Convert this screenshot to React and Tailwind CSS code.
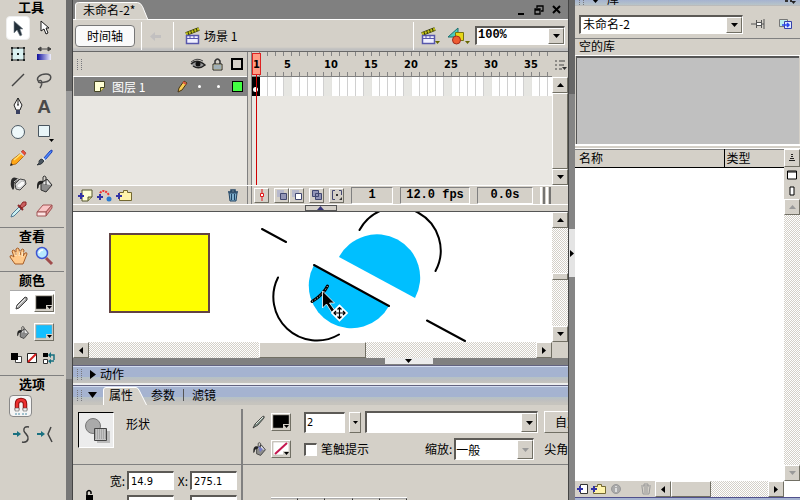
import React from "react";

const BEVEL = "border border-t-white border-l-white border-r-[#716f64] border-b-[#716f64] bg-[#d4d0c8]";
const SUNK = "border-t-2 border-l-2 border-b border-r border-t-[#5c5a56] border-l-[#5c5a56] border-b-white border-r-white bg-white";
const CHECKER = "bg-[repeating-conic-gradient(#fff_0_25%,#d4d0c8_0_50%)] bg-[length:2px_2px]";
const HEADER = "bg-[linear-gradient(#636380_0,#636380_1px,#d3dcf0_1px,#d3dcf0_2px,#a5b3d0_2px,#a5b3d0_12px,#b5c2c6_12px,#bebfc0_15px,#c6c4be_18px)]";
const NUM = "font-['DejaVu_Sans_Condensed','DejaVu_Sans',sans-serif]";

function Svg({ w = 20, h = 20, children, className = "" }) {
  return (
    <svg width={w} height={h} viewBox={`0 0 ${w} ${h}`} fill="none" aria-hidden="true" className={`shrink-0 ${className}`}>
      {children}
    </svg>
  );
}

const ARROWS = {
  up: "M0 4h7L3.500 0z",
  down: "M0 0h7L3.500 4z",
  left: "M4 0v7L0 3.500z",
  right: "M0 0v7l4-3.500z",
};

function Arrow({ dir, color = "#000" }) {
  const tall = dir === "left" || dir === "right";
  return (
    <Svg w={tall ? 4 : 7} h={tall ? 7 : 4}>
      <path d={ARROWS[dir]} fill={color} />
    </Svg>
  );
}

function ScrollButton({ dir, color }) {
  return (
    <button aria-label={`Scroll ${dir}`} className={`flex h-4 w-4 shrink-0 items-center justify-center ${BEVEL}`}>
      <Arrow dir={dir} color={color} />
    </button>
  );
}

function Combo({ label, value, className = "", textClass = "pl-1" }) {
  return (
    <div className={`flex ${SUNK} ${className}`}>
      <select aria-label={label} className={`min-w-0 flex-1 appearance-none bg-white outline-none ${textClass}`}>
        <option>{value}</option>
      </select>
      <span className={`flex w-4 shrink-0 items-center justify-center ${BEVEL}`}>
        <Arrow dir="down" />
      </span>
    </div>
  );
}

function Grip() {
  return (
    <Svg w={5} h={11}>
      {[0, 2, 4, 6, 8, 10].map((y) => (
        <path key={y} d={`M0 ${y}h1v1H0zM4 ${y}h1v1H4z`} fill="#77777c" />
      ))}
    </Svg>
  );
}

const brush = (
  <>
    <path d="M9 11L16 3l2-1 0 2-7 8z" fill="#4d8bff" stroke="#1d3fb8" />
    <path d="M8 10l3 3" stroke="#dfe4e8" strokeWidth="2.500" />
    <path d="M8 11l2 2q-2 4-7 4 3-2 2-4 1-2 3-2z" fill="#4a5560" stroke="#252b30" strokeWidth="0.800" />
  </>
);

const bucketShape = (
  <>
    <path d="M7 9l6-4 5 6-6 7-5-2z" fill="#8c8c8c" stroke="#333" />
    <path d="M9 9l4-3 4 5-7-1z" fill="#e9e9e9" />
    <path d="M12 11V3q-2-2-3 0v4" stroke="#333" />
    <path d="M9 7Q2 5 3 15q2-1 2-4l4-2z" fill="#222" />
  </>
);

const TOOLS = [
  ["Selection", <path key="a" d="M6 3v12l3-3 3 6 2-1-2-6h3z" fill="#24303a" stroke="#7f8b94" strokeWidth="0.600" />],
  ["Subselection", <path key="a" d="M7 3v10l3-2 2 5 2-1-2-5h3z" fill="#fff" stroke="#1b1b1b" />],
  ["Free Transform", (
    <g key="a">
      <path d="M4 4h12v12H4z" fill="#d9f1f1" stroke="#222" />
      <path d="M3 3h2v2H3zM15 3h2v2h-2zM3 15h2v2H3zM15 15h2v2h-2zM9 3h2v2H9zM9 15h2v2H9zM3 9h2v2H3zM15 9h2v2h-2zM9 9h2v2H9z" fill="#1c2222" />
    </g>
  )],
  ["Gradient Transform", (
    <g key="a">
      <defs><linearGradient id="blueFade"><stop stopColor="#0b0b9c" /><stop offset="1" stopColor="#f0f0ff" /></linearGradient></defs>
      <path d="M3 10h14v6H3z" fill="url(#blueFade)" />
      <path d="M4 5h13M7 3L4 5l3 2zM14 3l3 2-3 2z" stroke="#444" fill="#444" />
    </g>
  )],
  ["Line", <path key="a" d="M4 16L16 4" stroke="#444" strokeWidth="1.500" />],
  ["Lasso", <path key="a" d="M5 12C1 8 6 4 12 4c7 0 6 7-1 8-4 1-8 1-6-1 3-2 4 3 1 7" stroke="#4d4d4d" strokeWidth="1.500" />],
  ["Pen", (
    <g key="a">
      <path d="M10 2l4 7-2 5H8L6 9z" fill="#f8f8f8" stroke="#222" />
      <path d="M10 2v7" stroke="#222" />
      <path d="M10 8l1 1-1 1-1-1z" fill="#222" />
      <path d="M8 14h4v4H8z" fill="#394060" />
    </g>
  )],
  ["Text", null],
  ["Oval", <circle key="a" cx="10" cy="10" r="6.500" fill="#eef8fa" stroke="#4c5963" />],
  ["Rectangle", (
    <g key="a">
      <path d="M4.500 3.500h11v11h-11z" fill="#e8f5f8" stroke="#49555f" />
      <path d="M15 17h5l-2.500 3z" fill="#000" />
    </g>
  )],
  ["Pencil", (
    <g key="a">
      <path d="M3 17l1-5 9-7 3 3-8 8z" fill="#ffa716" stroke="#a45b0b" strokeWidth="0.800" />
      <path d="M6 12l8-7" stroke="#ffe574" strokeWidth="1.500" />
      <path d="M13 4l2-2 3 3-2 3z" fill="#e84e3a" stroke="#963329" strokeWidth="0.600" />
      <path d="M12 4l4 4" stroke="#d7dce0" strokeWidth="1.500" />
      <path d="M2 18l1-3 2 2z" fill="#222" />
    </g>
  )],
  ["Brush", <g key="a">{brush}</g>],
  ["Ink Bottle", (
    <g key="a">
      <path d="M7 10l5-5 5 1 1 4-6 6-4-1z" fill="#d8d8d8" stroke="#444" />
      <path d="M9 11l5-4 3 1-1 3-4 3-3-1z" fill="#fafafa" stroke="#999" strokeWidth="0.500" />
      <path d="M11 5Q4 1 3 7q-1 6 2 9 2-2 1-6l4-4z" fill="#2b2b2b" />
      <path d="M6 8l4-3" stroke="#ddd" />
    </g>
  )],
  ["Paint Bucket", <g key="a">{bucketShape}</g>],
  ["Eyedropper", (
    <g key="a">
      <path d="M3 17l1-3 7-7 2 2-7 7z" fill="#c9f0f2" stroke="#547a94" />
      <path d="M10 5l5 5" stroke="#8c2525" strokeWidth="2" />
      <path d="M12 6l3-4 3 0 0 3-4 3z" fill="#c96060" stroke="#8c2525" />
    </g>
  )],
  ["Eraser", (
    <g key="a">
      <path d="M3 12l6-7h9l-6 7z" fill="#f8c5c5" stroke="#a15454" />
      <path d="M12 12l6-7v3l-6 8z" fill="#e39494" stroke="#a15454" />
      <path d="M3 12h9v4H3z" fill="#fde3e3" stroke="#a15454" />
    </g>
  )],
];

function Swatch({ color, none = false, label }) {
  return (
    <button aria-label={label} className={`flex shrink-0 ${BEVEL}`}>
      <Svg w={18} h={16}>
        <path d="M1 1h16v13H1z" fill={none ? "#fff" : color} stroke="#a5a29a" strokeWidth="0.500" />
        {none && <path d="M3 13L15 2" stroke="#c5174f" strokeWidth="2" />}
        <path d="M11 10h7v6h-7z" fill="#d4d0c8" />
        <path d="M12 11h5l-2.500 3z" fill="#000" />
      </Svg>
    </button>
  );
}

function SectionTitle({ children, className = "h-[17px]" }) {
  return <h2 className={`flex items-center justify-center pb-0.5 text-[13px] leading-none font-bold ${className}`}>{children}</h2>;
}

function Toolbar() {
  return (
    <aside className="flex w-[66px] shrink-0 flex-col bg-[#d4d0c8]">
      <div className="w-[62px]"><SectionTitle className="h-[15px]">工具</SectionTitle></div>
      <div className="grid auto-rows-[26px] grid-cols-[26px_26px] pl-[5px]">
        {TOOLS.map(([name, art], i) => (
          <button
            key={name}
            aria-label={name}
            className={`m-px flex items-center justify-center rounded-sm ${i === 0 ? "border border-[#eee] bg-white" : ""}`}
          >
            {art ? <Svg>{art}</Svg> : <span className="font-['Liberation_Sans',sans-serif] text-[19px] leading-none font-bold text-[#4a4a4a]">A</span>}
          </button>
        ))}
      </div>
      <section className="mt-1 w-16 border-t border-[#808080]">
        <SectionTitle>查看</SectionTitle>
        <div className="flex h-[22px] items-center gap-1.5 pl-2">
          <button aria-label="Hand">
            <Svg>
              <path d="M7 18L2 11q0-3 4 0L4 5q1-2 3 0l1 4V3q2-2 3 0l1 6 1-5q2-2 3 0l-1 6 2-3q2-1 2 1l-4 10z" fill="#ffc98a" stroke="#a45d28" />
              <path d="M8 6v4M12 5l-1 5M15 6l-1 5" stroke="#fff0cf" />
            </Svg>
          </button>
          <button aria-label="Zoom">
            <Svg>
              <path d="M12 12l6 6" stroke="#a04c4c" strokeWidth="3" />
              <circle cx="8" cy="7" r="5.500" fill="#b9e9ff" stroke="#4056d2" strokeWidth="1.500" />
              <path d="M5 7q1-3 4-3" stroke="#fff" strokeWidth="1.500" />
            </Svg>
          </button>
        </div>
      </section>
      <section className="mt-1 w-16 border-t border-[#808080]">
        <SectionTitle>颜色</SectionTitle>
        <div className="mt-px ml-2.5 flex h-6 w-[45px] items-center justify-between border-t border-[#aaa] bg-white px-px">
          <Svg><path d="M5 16l1-4 8-8q3 0 2 3l-8 8z" fill="#aaa" stroke="#444" /><path d="M6 14l8-8" stroke="#eee" /></Svg>
          <Swatch label="Stroke color" color="#000" />
        </div>
        <div className="mt-1.5 ml-2.5 flex h-6 w-[45px] items-center justify-between px-px">
          <Svg w={20} h={20}><g transform="translate(4 3) scale(.75)">{bucketShape}</g></Svg>
          <Swatch label="Fill color" color="#14bfff" />
        </div>
        <div className="mt-1.5 flex h-4 items-center gap-1 pl-2.5">
          <button aria-label="Black and white"><Svg w={12} h={12}><path d="M5.500 4.500h6v6h-6z" fill="#fff" stroke="#444" /><path d="M1 1h7v7H1z" fill="#000" /></Svg></button>
          <button aria-label="No color"><Svg w={12} h={12}><path d="M1.500 1.500h9v9h-9z" fill="#fff" stroke="#222" /><path d="M2 10l8-8" stroke="#d51d1d" strokeWidth="2" /></Svg></button>
          <button aria-label="Swap colors">
            <Svg w={14} h={12}>
              <path d="M1 1h5v4H1z" fill="#000" /><path d="M1.500 7.500h4v4h-4z" fill="#fff" stroke="#333" />
              <path d="M8 3h4v5M12 9H8" stroke="#187080" strokeWidth="1.500" /><path d="M9 0v6L6 3zM9 7v5L6 9z" fill="#187080" />
            </Svg>
          </button>
        </div>
      </section>
      <section className="mt-[9px] w-16 border-t border-[#808080]">
        <SectionTitle>选项</SectionTitle>
        <button aria-label="Snap to objects" className="mt-0.5 ml-[9px] flex h-[22px] w-[23px] items-center justify-center rounded-sm border border-[#888] bg-[#f5f5f5]">
          <Svg>
            <path d="M6 14V8q0-4 4-4t4 4v6" stroke="#8c1010" strokeWidth="4.500" />
            <path d="M6 13V8q0-4 4-4t4 4v5" stroke="#ed3030" strokeWidth="2.500" />
            <path d="M4 12h4v3H4zM12 12h4v3h-4z" fill="#eee" stroke="#444" strokeWidth="0.500" />
            <path d="M5 17v2M8 17v2M12 17v2M15 17v2" stroke="#5190aa" />
          </Svg>
        </button>
        <div className="mt-2 flex gap-1 pl-3">
          <button aria-label="Smooth"><Svg w={20} h={20}><path d="M1 9h5" stroke="#197080" strokeWidth="2" /><path d="M5 6v6l4-3z" fill="#197080" /><path d="M17 2q-6-1-5 4c1 3 5 4 4 8q-1 4-6 3" stroke="#444" strokeWidth="1.500" /></Svg></button>
          <button aria-label="Straighten"><Svg w={18} h={20}><path d="M1 9h5" stroke="#197080" strokeWidth="2" /><path d="M5 6v6l4-3z" fill="#197080" /><path d="M15 2L12 9l4 8" stroke="#444" strokeWidth="1.500" /></Svg></button>
        </div>
      </section>
    </aside>
  );
}

const clapper = (
  <>
    <path d="M2 7L15 2" stroke="#333800" strokeWidth="4" />
    <path d="M2 7L15 2" stroke="#c4c41c" strokeWidth="2.500" strokeDasharray="2 1" />
    <path d="M2.500 8.500h12v8h-12z" fill="#f0f0ff" stroke="#5757ac" strokeWidth="1.500" />
    <path d="M3 11.500h11M6 9v2M10 9v2" stroke="#5757ac" />
  </>
);

function DocumentBar() {
  return (
    <>
      <div className="flex h-[19px] items-end justify-between bg-[#808080] pl-0.5">
        <div className="relative flex h-[17px] w-[74px] items-center">
          <Svg w={74} h={18} className="absolute left-0 top-0"><path d="M0.500 18V3q0-2.500 3-2.500h59q3 0 5 4L73 18z" fill="#d4d0c8" stroke="#fff" /></Svg>
          <span className="relative pb-0.5 pl-2 text-xs leading-none">未命名-2*</span>
        </div>
        <div className="flex h-full items-center gap-2 pr-1.5">
          <button aria-label="Minimize"><Svg w={10} h={10}><path d="M2 8h6v2H2z" fill="#000" /></Svg></button>
          <button aria-label="Restore"><Svg w={10} h={10}><path d="M3 3V1h6v5H7M3 1h6M1 4h5v5H1zM1 5h5" stroke="#000" strokeWidth="1.300" /></Svg></button>
          <button aria-label="Close"><Svg w={10} h={10}><path d="M1 1l7 7M8 1L1 8" stroke="#000" strokeWidth="2" /></Svg></button>
        </div>
      </div>
      <div className="flex h-[33px] items-center border-t border-b border-t-white border-b-[#686868] bg-[linear-gradient(#d4d0c8_27px,#c0c0c0_29px)] pl-0.5 pr-[3px]">
        <button className="h-[22px] w-[60px] rounded-sm border border-[#777] bg-[#fafafa] text-xs leading-none">时间轴</button>
        <span className="ml-1.5 h-7 w-px bg-white" />
        <Svg w={12} h={10} className="ml-2"><path d="M5 1v3h6v3H5v3L0 5.500z" fill="#c2c0c0" /></Svg>
        <span className="ml-[11px] h-7 w-px bg-white" />
        <Svg w={18} h={18} className="ml-2.5">{clapper}</Svg>
        <span className="ml-0.5 text-xs leading-none">场景 1</span>
        <span className="ml-auto h-7 w-px bg-white" />
        <button aria-label="Edit scene" className="ml-1.5"><Svg w={20} h={18}>{clapper}<path d="M15 14h5l-2.500 3z" fill="#666600" /></Svg></button>
        <button aria-label="Edit symbols" className="ml-[7px]">
          <Svg w={24} h={18}>
            <path d="M1 10L11 1v9z" fill="#4ccbbc" stroke="#1d6e70" />
            <path d="M8.500 5.500h8v8h-8z" fill="#e6d618" stroke="#777412" />
            <circle cx="9.500" cy="13" r="4" fill="#ee5b32" stroke="#a02a1b" />
            <path d="M18 14h5l-2.500 3z" fill="#666600" />
          </Svg>
        </button>
        <Combo label="Zoom level" value="100%" className="ml-1 h-[19px] w-[90px]" textClass="pl-px pb-0.5 font-['Liberation_Mono',monospace] text-xs leading-none font-bold" />
      </div>
    </>
  );
}

const FRAMES = Array.from({ length: 60 }, (_, i) => i + 1);
const FRAME_LABELS = [5, 10, 15, 20, 25, 30, 35];

function FrameButton({ label, children, className = "" }) {
  return <button aria-label={label} className={`flex h-[15px] w-[15px] items-center justify-center ${BEVEL} ${className}`}><Svg w={12} h={12}>{children}</Svg></button>;
}

function Readout({ children, className }) {
  return <output className={`flex h-[17px] items-center justify-center border border-t-[#808080] border-l-[#808080] border-b-white border-r-white font-['Liberation_Mono',monospace] text-xs leading-none font-bold ${className}`}>{children}</output>;
}

const page = <path d="M1.500 1.500h10v6l-4 4h-6z" fill="#ffffd5" stroke="#444424" />;

function Timeline() {
  return (
    <section className="bg-[#d4d0c8]">
      <div className="flex">
        <div className="flex w-[174px] shrink-0 flex-col">
          <div className="flex h-[25px] items-center border-b border-white pr-1 pl-1">
            <Grip />
            <Svg w={16} h={12} className="ml-auto"><path d="M1 6q6-6 14 1-6 5-12 1" fill="#999" stroke="#222" strokeWidth="1.500" /><circle cx="8" cy="6" r="2.500" fill="#111" /><path d="M1 4q6-5 12-1" stroke="#444" /></Svg>
            <Svg w={11} h={13} className="ml-1.5"><path d="M3 6V3q2.500-4 5 0v3" stroke="#333" strokeWidth="1.500" /><path d="M1 6h9v6H1z" fill="#f8f6c8" stroke="#222" /><path d="M2 8h7M2 10h7" stroke="#4c6da8" /></Svg>
            <Svg w={12} h={12} className="ml-2"><path d="M1 1h10v10H1z" stroke="#000" strokeWidth="2" /></Svg>
          </div>
          <div className="ml-px flex h-[19px] items-center bg-[#808080] pr-1 pl-[19px] text-white">
            <Svg w={13} h={13}>{page}<path d="M7.500 11.500v-4h4" fill="#ddd66c" stroke="#444424" /></Svg>
            <span className="ml-1.5 text-xs leading-none">图层 1</span>
            <Svg w={12} h={13} className="ml-auto"><path d="M2 12l1-4 5-7 3 2-5 7z" fill="#f6cc55" stroke="#4a3512" /><path d="M7 2l3 2" stroke="#db5544" strokeWidth="2" /></Svg>
            <span className="ml-2.5 h-[3px] w-[3px] rounded-full bg-white" />
            <span className="ml-4 h-[3px] w-[3px] rounded-full bg-white" />
            <span className="ml-3 h-[11px] w-[11px] border border-black bg-[#42ff42]" />
          </div>
          <div className="h-[89px] bg-[#e9e7e2]" />
        </div>
        <div className="w-[5px] shrink-0 border-x border-[#808080]" />
        <div className="relative min-w-0 flex-1">
          <div className="h-[25px] overflow-hidden border-b border-[#808080] bg-[#d4d0c8]">
            <div className="h-1 bg-[repeating-linear-gradient(90deg,transparent_0_7px,#858585_7px_8px)]" />
            <div className={`flex h-4 items-center pl-8 text-[11px] leading-none font-bold ${NUM}`}>
              {FRAME_LABELS.map((n) => <span key={n} className="w-10 shrink-0">{n}</span>)}
            </div>
            <div className="h-1 bg-[repeating-linear-gradient(90deg,transparent_0_7px,#858585_7px_8px)]" />
          </div>
          <div className="flex h-[19px] overflow-hidden bg-white">
            {FRAMES.map((n) => (
              <span
                key={n}
                className={`flex w-2 shrink-0 items-end justify-center border-r pb-1 ${n === 1 ? "border-black bg-black" : n % 5 === 0 ? "border-[#e4e4e0] bg-[#e6e6e2]" : "border-[#d0d0d0]"}`}
              >
                {n === 1 && <i className="h-[5px] w-[5px] rounded-full bg-white" />}
              </span>
            ))}
          </div>
          <div className="h-[89px] bg-[#e9e7e2]" />
          <div className={`absolute top-px left-0 flex h-[22px] w-[9px] items-center border border-[#d22] bg-[#ff9c84] text-[11px] leading-none font-bold ${NUM}`}>1</div>
          <div className="absolute top-[23px] bottom-0 left-1 w-px bg-[#d00000]" />
        </div>
        <div className="flex w-4 shrink-0 flex-col">
          <button aria-label="Timeline options" className="flex h-[25px] items-center justify-center">
            <Svg w={13} h={12}><path d="M1 2h2M1 6h2M1 10h2M5 2h6M5 6h5M5 10h3" stroke="#444" /><path d="M8 8h5l-2.500 3z" fill="#333" /></Svg>
          </button>
          <ScrollButton dir="up" />
          <div className={`flex-1 ${BEVEL}`} />
          <ScrollButton dir="down" />
        </div>
      </div>
      <div className="flex h-[19px] border-t border-white">
        <div className="flex w-[174px] shrink-0 items-center gap-1 pr-2 pl-[5px]">
          <button aria-label="Insert layer"><Svg w={15} h={13}><path d="M4 1h10v7l-4 4H4z" fill="#ffffd4" stroke="#555530" /><path d="M10 12V8h4" fill="#cccc7a" stroke="#555530" /><path d="M0 7h6M3 4v6" stroke="#3232a5" strokeWidth="2" /></Svg></button>
          <button aria-label="Add motion guide"><Svg w={15} h={13}><path d="M3 4q4-5 9 2" stroke="#f03333" strokeWidth="2" strokeDasharray="2 1" /><circle cx="12" cy="10" r="2.500" fill="#2878d0" /><path d="M0 8h6M3 5v6" stroke="#3232a5" strokeWidth="2" /></Svg></button>
          <button aria-label="Insert folder"><Svg w={16} h={13}><path d="M3.500 3.500h4v-2h4v2h4v8h-12z" fill="#fff3ab" stroke="#736831" /><path d="M0 7h6M3 4v6" stroke="#3232a5" strokeWidth="2" /></Svg></button>
          <button aria-label="Delete layer" className="ml-auto"><Svg w={12} h={14}><path d="M1 4h10M4 4V2h4v2" stroke="#204363" strokeWidth="1.500" /><path d="M2 5h8l-1 8H3z" fill="#80b0cd" stroke="#204363" /><path d="M4.500 6v6M7.500 6v6" stroke="#204363" /></Svg></button>
        </div>
        <div className="w-[5px] shrink-0 border-x border-[#808080]" />
        <div className="flex min-w-0 flex-1 items-center overflow-hidden pr-4 pl-0.5">
          <FrameButton label="Center frame"><path d="M6 0v12" stroke="#e01818" /><path d="M4.500 4.500h3v3h-3z" fill="#fff" stroke="#e01818" /></FrameButton>
          <FrameButton label="Onion skin" className="ml-[5px]"><path d="M1 1h7v7H1z" fill="#b7b9cc" /><path d="M4.500 4.500h6v6h-6z" fill="#9295b6" stroke="#404770" /></FrameButton>
          <FrameButton label="Onion skin outlines"><path d="M1 1h7v7H1z" fill="#b7b9cc" /><path d="M4.500 4.500h6v6h-6z" fill="#fff" stroke="#404770" /></FrameButton>
          <FrameButton label="Edit multiple frames" className="ml-[5px]"><path d="M1.500 1.500h6v6h-6zM4.500 4.500h6v6h-6z" fill="#9295b6" stroke="#404770" /></FrameButton>
          <FrameButton label="Modify onion markers" className="ml-[5px]"><path d="M4 1.500H1.500v9H4M8 1.500h2.500V6" stroke="#444870" /><path d="M5 5h2v2H5zM8 11h3V8z" fill="#333" /></FrameButton>
          <Readout className="ml-[7px] w-[42px]">1</Readout>
          <Readout className="ml-[7px] w-[70px]">12.0 fps</Readout>
          <Readout className="ml-[7px] w-14">0.0s</Readout>
          <Svg w={12} h={17} className="ml-auto"><path d="M1 0v17M7 0v17" stroke="#fff" strokeWidth="2" /><path d="M4 0v17M10 0v17" stroke="#555" strokeWidth="1.500" /></Svg>
        </div>
      </div>
      <div className="flex h-2 justify-center border-t border-b border-t-white border-b-[#555]">
        <button aria-label="Collapse timeline" className="flex h-1.5 w-8 items-center justify-center border border-[#555] bg-[#d4d0c8]"><Arrow dir="up" color="#343478" /></button>
      </div>
    </section>
  );
}

function Stage() {
  return (
    <section>
      <div className="flex">
        <div className="h-[130px] min-w-0 flex-1 overflow-hidden bg-white">
          <svg width="479" height="130" viewBox="73 212 479 130" fill="none" role="img" aria-label="Stage artwork">
            <path d="M110 234h99v78h-99z" fill="#ff0" stroke="#634343" strokeWidth="2" />
            <path d="M339 257A42 42 0 0 1 415 298z" fill="#00bfff" />
            <path d="M314 265L389 306A42 42 0 0 1 314 265z" fill="#00bfff" />
            <g stroke="#000" strokeWidth="2" strokeLinecap="round">
              <path d="M359.500 230A42 42 0 0 1 435.500 271" />
              <path d="M278 277.500A43.500 43.500 0 0 0 339 334.500" />
              <path d="M262 229l24 13M427 320.500L465 341M314 265l75 41" />
              <path d="M312 301.500Q323 295 327.500 286" strokeWidth="3" />
            </g>
            <path d="M312 301.500Q323 295 327.500 286" stroke="#fff" strokeDasharray="1 2" />
            <path d="M322.500 291v17l4-4 5 8 3-2-5-7h5z" fill="#000" stroke="#fff" strokeWidth="0.800" />
            <path d="M339.500 306l-3 3h2v3h-3v-2l-3 3 3 3v-2h3v3h-2l3 3 3-3h-2v-3h3v2l3-3-3-3v2h-3v-3h2z" fill="#fff" stroke="#fff" strokeWidth="2.500" />
            <path d="M339.500 307.500v11M334 313h11M337.500 309.500l2-2 2 2M337.500 316.500l2 2 2-2M336 311l-2 2 2 2M343 311l2 2-2 2" stroke="#000" strokeWidth="1.200" />
          </svg>
        </div>
        <div className={`flex w-4 shrink-0 flex-col ${CHECKER}`}>
          <ScrollButton dir="up" />
          <div className="flex-1" />
          <div className={`mb-[46px] h-[7px] ${BEVEL}`} />
          <ScrollButton dir="down" />
        </div>
      </div>
      <div className="flex h-4">
        <div className={`flex min-w-0 flex-1 ${CHECKER}`}>
          <ScrollButton dir="left" />
          <div className="flex flex-1 justify-center"><div className={`w-[107px] ${BEVEL}`} /></div>
          <ScrollButton dir="right" />
        </div>
        <div className="w-4 bg-[#d4d0c8]" />
      </div>
      <div className="flex h-[7px] justify-center bg-[#808080] pl-44">
        <button aria-label="Collapse panels" className="flex h-1.5 w-12 items-center justify-center bg-[#ececec]"><Arrow dir="down" /></button>
      </div>
    </section>
  );
}

const FIELD = `h-[19px] w-[47px] shrink-0 px-0.5 text-[11px] leading-none outline-none ${SUNK} ${NUM}`;

function Field({ label, value, labelClass }) {
  return (
    <>
      <label htmlFor={`field-${label}`} className={`shrink-0 text-right ${labelClass}`}>{label}:</label>
      <input id={`field-${label}`} defaultValue={value} className={FIELD} />
    </>
  );
}

function Properties() {
  return (
    <section className="flex min-h-0 flex-1 flex-col overflow-hidden bg-[#d4d0c8] text-xs leading-none">
      <div className={`flex h-[18px] shrink-0 items-center pl-1 ${HEADER}`}>
        <Grip />
        <Svg w={6} h={9} className="ml-2"><path d="M0 0v9l6-4.500z" fill="#000" /></Svg>
        <h2 className="ml-1">动作</h2>
      </div>
      <div className="h-0.5 shrink-0 bg-[#eee]" />
      <div className={`flex h-5 shrink-0 items-center pl-1 ${HEADER}`}>
        <Grip />
        <Svg w={9} h={6} className="ml-1.5"><path d="M0 0h9L4.500 6z" fill="#000" /></Svg>
        <button className="relative ml-1.5 flex h-5 w-11 items-center pl-1">
          <Svg w={44} h={18} className="absolute left-0 bottom-0"><path d="M0.500 18V3Q0.500 0.500 3 0.500h30q2 0 3.500 3.500l7 14" fill="#d4d0c8" stroke="#fff" /></Svg>
          <span className="relative pl-0.5">属性</span>
        </button>
        <button className="ml-1">参数</button>
        <span className="ml-2 h-3 w-px bg-[#555]" />
        <button className="ml-2">滤镜</button>
      </div>
      <div className="flex min-h-0 flex-1">
        <div className="w-[168px] shrink-0">
          <div className="flex h-[60px] items-start border-b border-[#808080] pt-[7px] pl-[5px]">
            <div className="h-9 w-9 border border-t-black border-l-black border-r-white border-b-white bg-[#ececec]">
              <Svg w={34} h={34}><path d="M18 18h13v12H18z" fill="#bbb" /><circle cx="14" cy="13" r="7.500" fill="#aaa" stroke="#777" /><path d="M15.500 15.500h12v12h-12z" fill="#c4c4c4" stroke="#444" /><path d="M16 17h11M16 19h11M16 21h11M16 23h11M16 25h11" stroke="#888" strokeDasharray="1 1" /></Svg>
            </div>
            <h3 className="mt-1.5 ml-3">形状</h3>
          </div>
          <div className="relative mt-[6px] flex flex-col gap-[5px]">
            <div className="flex items-center"><Field label="宽" value="14.9" labelClass="w-[54px] pr-0.5" /><Field label="X" value="275.1" labelClass="w-4 pr-0.5" /></div>
            <div className="flex items-center gap-4 pl-[54px]">
              <input aria-label="Height" className={FIELD} />
              <input aria-label="Y position" className={FIELD} />
            </div>
            <Svg w={9} h={13} className="absolute top-[18px] left-3"><path d="M2 6V3q2-3 4 0v2" stroke="#000" strokeWidth="1.500" /><path d="M1 6h7v6H1z" fill="#000" /></Svg>
          </div>
        </div>
        <div className="mt-1 w-0.5 shrink-0 bg-[#808080]" />
        <div className="flex min-w-0 flex-1 flex-col overflow-hidden">
          <div className="flex h-[60px] shrink-0 flex-col gap-[5px] border-b border-[#808080] pt-1.5 pl-2 whitespace-nowrap">
            <div className="flex h-[22px] items-center">
              <Svg w={16} h={16}><path d="M2 14l2-4 7-7q3-2 2 1L7 11z" fill="#7e8d85" stroke="#222" strokeWidth="0.700" /><path d="M5 10l7-7" stroke="#dde5dd" /></Svg>
              <span className="ml-1 flex"><Swatch label="Line color" color="#000" /></span>
              <input aria-label="Stroke height" defaultValue="2" className={`ml-[13px] h-[21px] w-[41px] shrink-0 px-px text-[11px] outline-none ${SUNK} ${NUM}`} />
              <button aria-label="Adjust stroke height" className={`ml-1 flex h-[21px] w-3 shrink-0 items-center justify-center ${BEVEL}`}><Svg w={5} h={3}><path d="M0 0h5L2.500 3z" fill="#000" /></Svg></button>
              <Combo label="Stroke style" value="" className="ml-1 h-[22px] w-[173px] shrink-0" />
              <button className={`ml-1.5 h-[22px] w-16 shrink-0 pl-2.5 text-left ${BEVEL}`}>自定义...</button>
            </div>
            <div className="flex h-[22px] items-center">
              <Svg w={16} h={16}><g transform="scale(.8)">{bucketShape}</g><path d="M7 5l5 3-3 3z" fill="#777cc8" /></Svg>
              <span className="ml-1 flex"><Swatch label="Fill" none /></span>
              <input id="hinting" type="checkbox" className={`ml-[13px] h-[13px] w-[13px] shrink-0 appearance-none ${SUNK}`} />
              <label htmlFor="hinting" className="ml-1">笔触提示</label>
              <label htmlFor="scale" className="ml-14">缩放:</label>
              <div className={`ml-0.5 flex h-[22px] w-[80px] shrink-0 ${SUNK}`}>
                <select id="scale" className="min-w-0 flex-1 appearance-none bg-white outline-none"><option>一般</option></select>
                <span className={`flex w-4 items-center justify-center ${BEVEL}`}><Arrow dir="down" color="#999" /></span>
              </div>
              <span className="ml-2.5">尖角</span>
            </div>
          </div>
          <div className="flex flex-1 flex-col justify-end overflow-hidden pl-7">
            <div className="grid h-[3px] w-[136px] grid-cols-5 border-t border-white">
              {[1, 2, 3, 4, 5].map((n) => <span key={n} className="border-t border-r border-t-[#aaa] border-r-[#333]" />)}
            </div>
          </div>
        </div>
      </div>
    </section>
  );
}

function Library() {
  return (
    <aside className="flex w-[225px] shrink-0 flex-col overflow-hidden bg-[#d4d0c8] text-xs leading-none">
      <div className="flex h-[5px] shrink-0 items-end overflow-hidden bg-[linear-gradient(#a5b3d0,#b8c4c9)] pl-1">
        <Grip />
        <span className="ml-2 mb-0.5 flex"><Arrow dir="down" /></span>
        <h2 className="ml-2">库</h2>
        <Svg w={11} h={5} className="mr-1 ml-auto"><path d="M0 1h3M5 1h2" stroke="#333" strokeWidth="2" /><path d="M6 1h5L8.500 4z" fill="#222" /></Svg>
      </div>
      <div className="flex h-[33px] shrink-0 items-center border-t border-[#bbb] pt-1 pr-[7px] pl-1">
        <Combo label="Library document" value="未命名-2" className="h-[19px] flex-1" textClass="pl-0.5 pb-0.5 text-xs leading-none" />
        <button aria-label="Pin library" className="ml-2"><Svg w={14} h={12}><path d="M0 6h5M5.500 2v8M6 4.500h4M6 7.500h4M10.500 2v8M13 1v10M11 6h2" stroke="#555" /><path d="M6 5h4v2H6z" fill="#fff" /></Svg></button>
        <button aria-label="New library panel" className="ml-[13px]"><Svg w={15} h={12}><path d="M1.500 1.500h8v7h-8z" fill="#b9eeee" stroke="#777" /><path d="M6.500 3.500h7v7h-7z" fill="#dceaff" stroke="#3540aa" /><path d="M4 7h7M9 5l2 2-2 2" stroke="#2844ee" strokeWidth="1.500" /></Svg></button>
      </div>
      <p className="flex h-[18px] shrink-0 items-center border-t border-b border-t-[#808080] border-b-white pb-0.5 pl-1">空的库</p>
      <div className="mr-px ml-px h-[88px] shrink-0 border-t-2 border-l border-[#555] bg-[#c0c0c0]" />
      <div className="h-[5px] shrink-0 border-t-2 border-b border-white" />
      <div className="flex min-h-0 flex-1">
        <div className="flex min-w-0 flex-1 flex-col bg-white">
          <table className="w-full table-fixed border-collapse">
            <thead>
              <tr className="h-[18px] border-t border-b border-t-[#808080] border-b-black bg-[#d4d0c8]">
                <th className="w-[149px] border-r border-black pb-0.5 pl-1 text-left font-normal">名称</th>
                <th className="pb-0.5 pl-0.5 text-left font-normal">类型</th>
              </tr>
            </thead>
          </table>
        </div>
        <div className="flex w-4 shrink-0 flex-col">
          <button aria-label="Sort order" className={`flex h-[18px] items-center justify-center ${BEVEL}`}><Svg w={8} h={8}><path d="M3 0h2v1H3zM3 2h2v1H3zM2 4h4v1H2zM1 6h6v1H1z" fill="#222" /></Svg></button>
          <button aria-label="Wide view" className="flex h-4 items-center justify-center"><Svg w={10} h={10}><path d="M0.500 1h9v8h-9z" fill="#fff" stroke="#000" /><path d="M0 2h10" stroke="#000" /></Svg></button>
          <button aria-label="Narrow view" className="flex h-4 items-center justify-center"><Svg w={10} h={10}><path d="M3 1h4v8H3z" fill="#fff" stroke="#000" /></Svg></button>
          <ScrollButton dir="up" color="#999" />
          <div className={`flex-1 ${CHECKER}`} />
          <ScrollButton dir="down" color="#999" />
        </div>
      </div>
      <div className="flex h-4 shrink-0 items-center">
        <button aria-label="New symbol" className="ml-0.5"><Svg w={13} h={12}><path d="M3.500 1.500h7v9h-7z" fill="#fff" stroke="#333" /><path d="M0 6h6M3 3v6" stroke="#3232a5" strokeWidth="2" /></Svg></button>
        <button aria-label="New folder" className="ml-px"><Svg w={16} h={12}><path d="M2.500 3.500h4v-2h4v2h4v7h-12z" fill="#fff3ab" stroke="#736831" /><path d="M0 6h6M3 3v6" stroke="#3232a5" strokeWidth="2" /></Svg></button>
        <button aria-label="Symbol properties" className="ml-1"><Svg w={11} h={11}><circle cx="5" cy="5" r="4.500" fill="#aaa" stroke="#999" /><path d="M5 2v1M5 4v4" stroke="#eee" strokeWidth="1.500" /></Svg></button>
        <button aria-label="Delete item" className="ml-auto"><Svg w={13} h={12}><path d="M1 3h10M4 3V1h4v2M2 4l1 7h6l1-7M5 4v6M7 4v6" stroke="#999" /></Svg></button>
        <div className={`ml-0.5 flex h-4 w-[129px] ${CHECKER}`}>
          <ScrollButton dir="left" />
          <div className={`w-10 ${BEVEL}`} />
          <div className="flex-1" />
          <ScrollButton dir="right" />
        </div>
        <div className="h-4 w-4 bg-white" />
      </div>
      <div className="h-[3px] shrink-0 border-t border-[#50508c] bg-[#a5b3d0]" />
    </aside>
  );
}

export default function App() {
  return (
    <div className="flex h-screen w-full overflow-hidden bg-[#808080] font-['Noto_Sans_CJK_SC',sans-serif] text-black">
      <Toolbar />
      <div className="w-[7px] shrink-0 border-r border-[#444] bg-[linear-gradient(#6c6c6c_91px,#999_91px,#999_379px,#777_379px)]" />
      <main className="flex min-w-0 flex-1 flex-col">
        <DocumentBar />
        <Timeline />
        <Stage />
        <Properties />
      </main>
      <div className="flex w-[7px] shrink-0 flex-col border-l border-[#444] bg-[linear-gradient(#666_94px,#858585_94px)] pt-[229px]">
        <button aria-label="Collapse library" className="flex h-12 items-center justify-center bg-[#e4e4e4]"><Arrow dir="right" /></button>
      </div>
      <Library />
    </div>
  );
}
